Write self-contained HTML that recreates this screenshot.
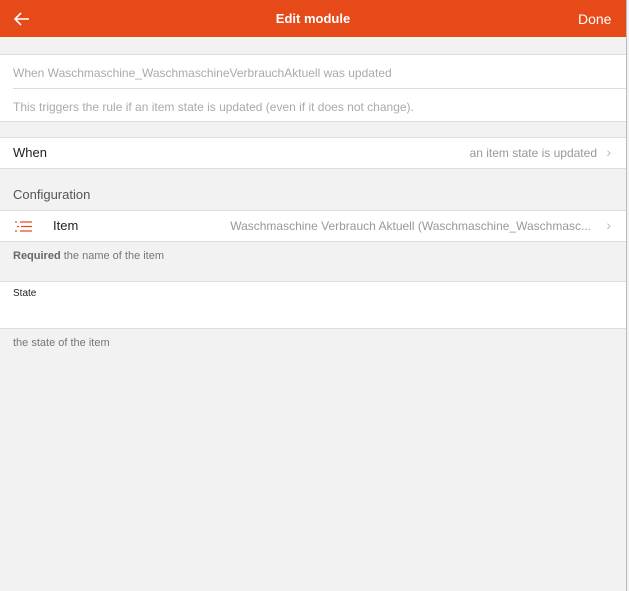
<!DOCTYPE html>
<html><head><style>
body{margin:0;width:629px;height:591px;background:#f2f2f2;font-family:"Liberation Sans",sans-serif;position:relative;overflow:hidden}
.a{position:absolute}
.hdr{left:0;top:0;width:626px;height:37px;background:#e64a19;color:#fff}
.w{background:#fff;left:0;width:626px;border-top:1px solid #ddd;border-bottom:1px solid #ddd;box-sizing:border-box}
.t{position:absolute;white-space:nowrap}
</style></head><body>
<div class="a hdr">
<svg class="a" style="left:13px;top:11px" width="18" height="16" viewBox="0 0 18 16"><path d="M16 8H2M8 2L2 8l6 6" stroke="#fff" stroke-width="1.6" fill="none"/></svg>
<div class="t" style="left:0;width:626px;text-align:center;top:11px;font-size:13px;font-weight:bold">Edit module</div>
<div class="t" style="left:578px;top:11px;font-size:14px">Done</div>
</div>
<div class="a" style="left:626px;top:0;width:1px;height:591px;background:#bbb"></div>
<div class="a w" style="top:54px;height:68px">
<div class="t" style="left:13px;top:11px;font-size:12px;color:#aaa">When Waschmaschine_WaschmaschineVerbrauchAktuell was updated</div>
<div class="a" style="left:13px;right:0;top:33px;height:1px;background:#ddd"></div>
<div class="t" style="left:13px;top:45px;font-size:12px;color:#aaa">This triggers the rule if an item state is updated (even if it does not change).</div>
</div>
<div class="a w" style="top:137px;height:32px">
<div class="t" style="left:13px;top:7px;font-size:13px;color:#222">When</div>
<div class="t" style="right:29px;top:8px;font-size:12px;color:#999">an item state is updated</div>
<div class="t" style="right:15px;top:6px;font-size:14px;color:#bbb">›</div>
</div>
<div class="t" style="left:13px;top:187px;font-size:13px;color:#555">Configuration</div>
<div class="a w" style="top:210px;height:32px">
<svg class="a" style="left:14px;top:10px" width="20" height="12" viewBox="0 0 20 12"><g stroke="#e64a19" stroke-width="1.3"><path d="M1 1h2M6 1h12M3 5.5h2M7 5.5h11M1 10h2M6 10h12"/></g></svg>
<div class="t" style="left:53px;top:7px;font-size:13px;color:#222">Item</div>
<div class="t" style="right:35px;top:8px;font-size:12px;color:#999">Waschmaschine Verbrauch Aktuell (Waschmaschine_Waschmasc...</div>
<div class="t" style="right:15px;top:6px;font-size:14px;color:#bbb">›</div>
</div>
<div class="t" style="left:13px;top:250px;font-size:11px;color:#777"><b style="color:#666">Required</b> the name of the item</div>
<div class="a w" style="top:281px;height:48px">
<div class="t" style="left:13px;top:6px;font-size:10px;color:#222">State</div>
</div>
<div class="t" style="left:13px;top:337px;font-size:11px;color:#777">the state of the item</div>
</body></html>
